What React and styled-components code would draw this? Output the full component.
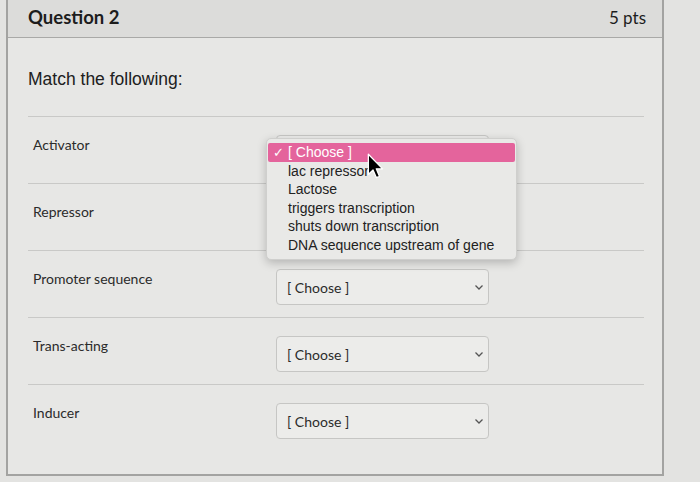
import React from "react";
import styled, { createGlobalStyle } from "styled-components";

const Global = createGlobalStyle`
  html, body { margin: 0; padding: 0; }
  body { background: #e2e2e0; font-family: Lato, "Open Sans", sans-serif; }
`;

const Page = styled.div`
  width: 700px;
  height: 482px;
  overflow: hidden;
  background: #e3e3e1;
  padding-left: 6px;
  box-sizing: border-box;
`;

const Card = styled.div`
  width: 658px;
  box-sizing: border-box;
  border: 2px solid #a3a3a1;
  border-top: none;
  background: #e7e7e5;
`;

const Header = styled.div`
  height: 37px;
  display: flex;
  align-items: center;
  justify-content: space-between;
  padding: 0 16px 0 20px;
  background: #dcdcda;
  border-bottom: 1px solid #a9a9a7;
  color: #1d1d1d;
`;

const Title = styled.div`
  font-family: Lato, sans-serif;
  font-weight: 700;
  font-size: 18.5px;
  margin-top: -3px;
`;

const Points = styled.div`
  font-family: Lato, sans-serif;
  font-size: 17px;
  margin-top: -2px;
`;

const Body = styled.div`
  padding: 30px 18px 0 20px;
`;

const Prompt = styled.div`
  font-family: "Liberation Sans", Arial, sans-serif;
  font-size: 17.5px;
  line-height: 22px;
  color: #202020;
  margin-bottom: 26px;
`;

const Row = styled.div`
  display: grid;
  grid-template-columns: 243px 213px;
  align-items: start;
  border-top: 1px solid #c9c9c7;
  padding: 18px 0 0 5px;
  height: ${(p) => (p.last ? 90 : 67)}px;
  box-sizing: border-box;
`;

const Label = styled.div`
  font-family: Lato, sans-serif;
  font-size: 14px;
  line-height: 20px;
  color: #2b2b2b;
`;

const SelectWrap = styled.div`
  position: relative;
`;

const SelectBox = styled.div`
  height: 36px;
  box-sizing: border-box;
  border: 1px solid #c6c6c4;
  border-radius: 4px;
  background: #ececea;
  display: flex;
  align-items: center;
  justify-content: space-between;
  padding: 0 4px 0 10px;
  font-family: Lato, sans-serif;
  font-size: 14px;
  color: #2b2b2b;
  & > * {
    visibility: ${(p) => (p.covered ? "hidden" : "visible")};
  }
`;

const Popup = styled.div`
  position: absolute;
  left: -10px;
  top: 3px;
  width: 251px;
  box-sizing: border-box;
  padding: 4px 1px 5px 1px;
  background: #e9e9e7;
  border: 1px solid #cfcfcd;
  border-radius: 5px;
  box-shadow: 0 3px 10px rgba(0, 0, 0, 0.22);
  z-index: 5;
`;

const Option = styled.div`
  display: flex;
  align-items: center;
  height: 18.5px;
  padding-left: 5px;
  font-family: "Liberation Sans", Arial, sans-serif;
  font-size: 14px;
  color: ${(p) => (p.selected ? "#ffffff" : "#222222")};
  background: ${(p) => (p.selected ? "#e4649c" : "transparent")};
  border-radius: 2px;
  white-space: nowrap;
`;

const Check = styled.span`
  width: 15px;
  font-size: 13px;
`;

const Cursor = styled.svg`
  position: absolute;
  left: 100px;
  top: 14px;
  z-index: 6;
`;

const Chevron = () => (
  <svg width="10" height="7" viewBox="0 0 10 7">
    <polyline points="1.5,1.5 5,5 8.5,1.5" fill="none" stroke="#555" strokeWidth="1.3" />
  </svg>
);

const options = [
  "[ Choose ]",
  "lac repressor",
  "Lactose",
  "triggers transcription",
  "shuts down transcription",
  "DNA sequence upstream of gene",
];

const items = ["Activator", "Repressor", "Promoter sequence", "Trans-acting", "Inducer"];

export default function App() {
  return (
    <Page>
      <Global />
      <Card>
        <Header>
          <Title>Question 2</Title>
          <Points>5 pts</Points>
        </Header>
        <Body>
          <Prompt>Match the following:</Prompt>
          {items.map((name, i) => (
            <Row key={name} last={i === items.length - 1}>
              <Label>{name}</Label>
              <SelectWrap>
                <SelectBox covered={i < 2}>
                  <span>[ Choose ]</span>
                  <Chevron />
                </SelectBox>
                {i === 0 && (
                  <Popup>
                    {options.map((o, j) => (
                      <Option key={o} selected={j === 0}>
                        <Check>{j === 0 ? "✓" : ""}</Check>
                        {o}
                      </Option>
                    ))}
                    <Cursor width="17" height="26" viewBox="0 0 13 20">
                      <path
                        d="M1 1 L1 16.5 L4.6 13.1 L7.2 19 L9.6 18 L7.1 12.2 L12 12.2 Z"
                        fill="#000"
                        stroke="#fff"
                        strokeWidth="1"
                        strokeLinejoin="round"
                      />
                    </Cursor>
                  </Popup>
                )}
              </SelectWrap>
            </Row>
          ))}
        </Body>
      </Card>
    </Page>
  );
}
